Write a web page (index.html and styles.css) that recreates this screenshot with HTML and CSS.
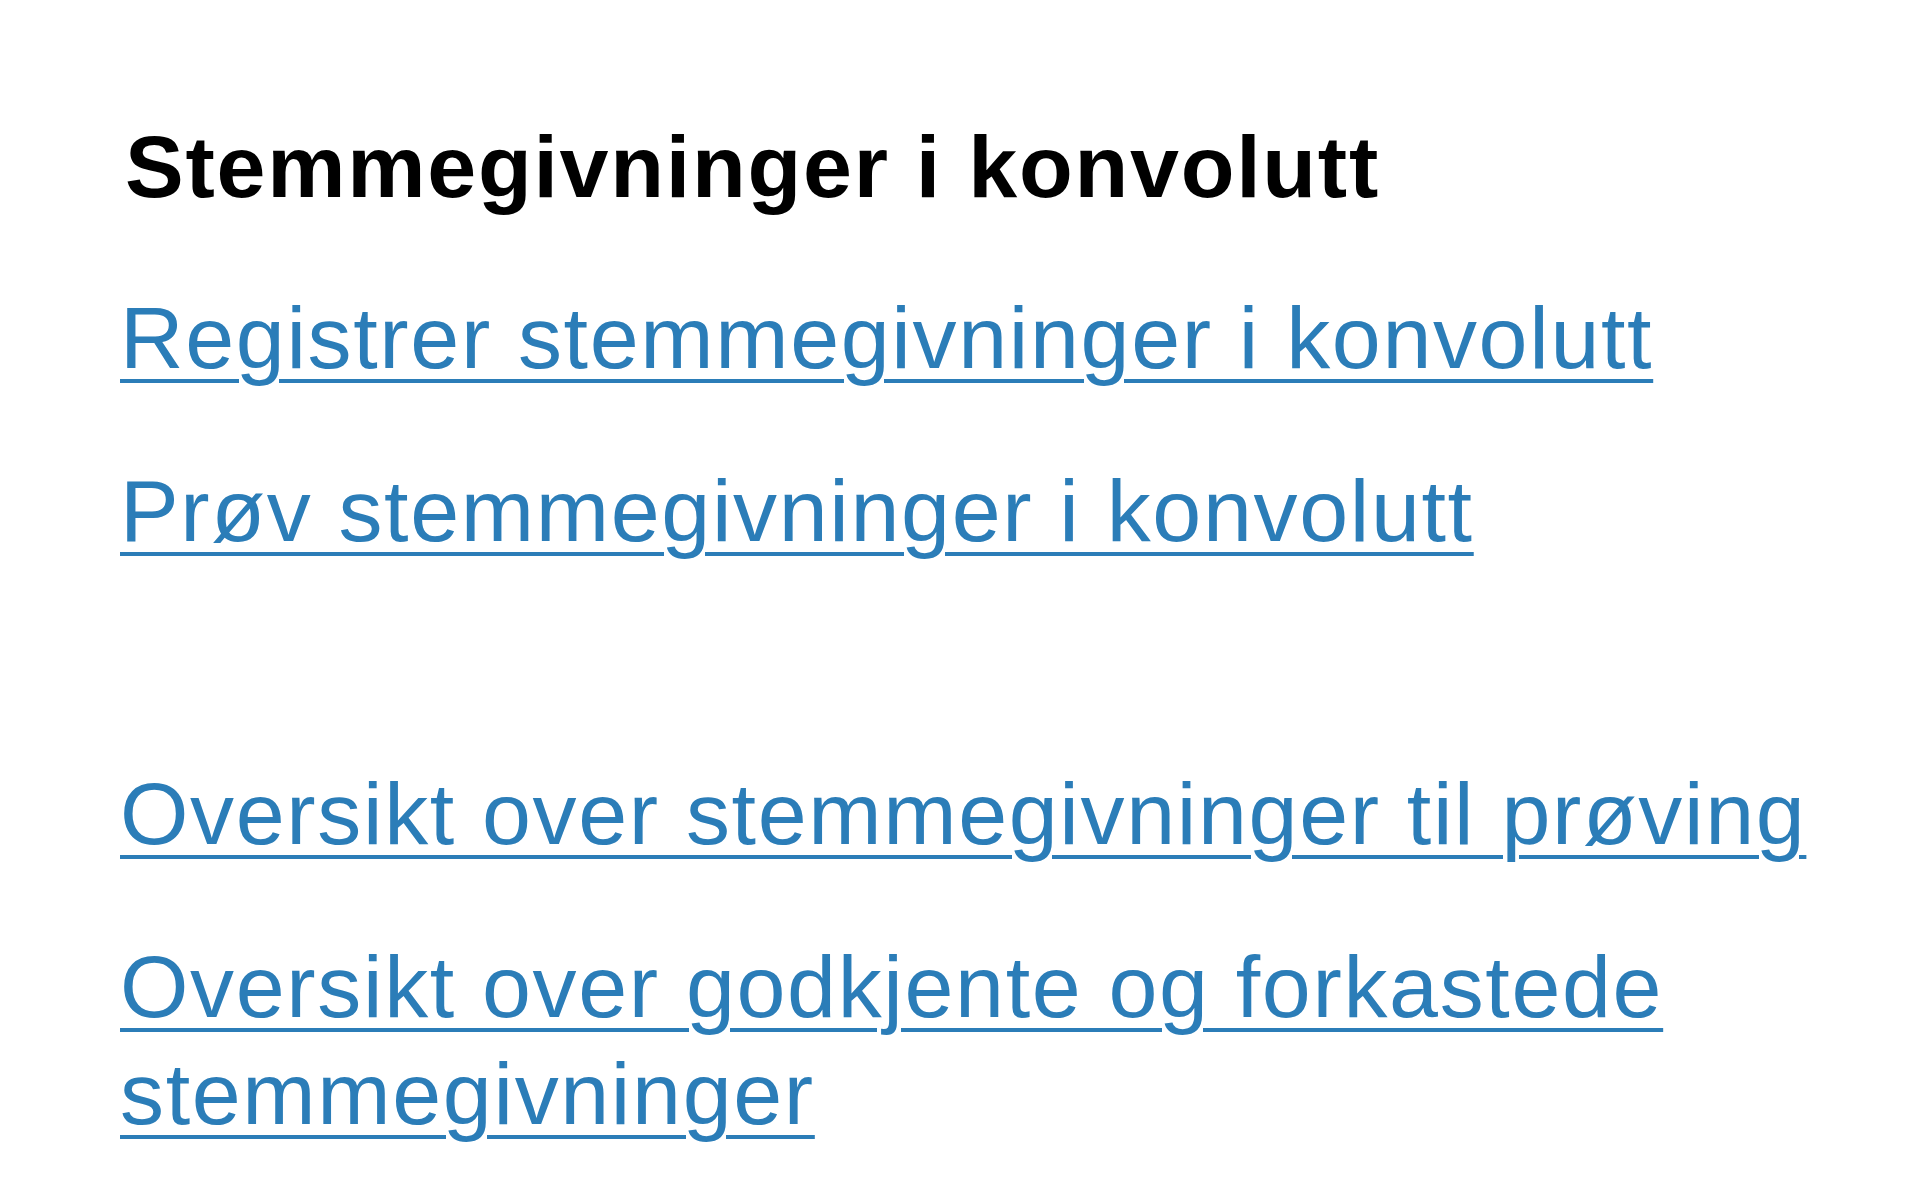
FILE: index.html
```html
<!DOCTYPE html>
<html lang="no">
<head>
<meta charset="utf-8">
<title>Stemmegivninger i konvolutt</title>
<link rel="stylesheet" href="styles.css">
</head>
<body>
<main class="page">
  <section class="group">
    <h2 class="title">Stemmegivninger i konvolutt</h2>
    <a class="link" href="#">Registrer stemmegivninger i konvolutt</a>
    <a class="link" href="#">Prøv stemmegivninger i konvolutt</a>
  </section>
  <section class="group">
    <a class="link" href="#">Oversikt over stemmegivninger til prøving</a>
    <a class="link" href="#">Oversikt over godkjente og forkastede stemmegivninger</a>
  </section>
</main>
</body>
</html>
```
FILE: styles.css
```css
html, body {
  margin: 0;
  padding: 0;
  background: #ffffff;
}
body {
  font-family: "Liberation Sans", Arial, sans-serif;
  font-size: 88px;
  line-height: 107px;
  letter-spacing: 1.65px;
}
.page {
  padding: 115px 40px 0 120px;
  display: flex;
  flex-direction: column;
  gap: 196px;
}
.group {
  display: flex;
  flex-direction: column;
  gap: 66px;
  align-items: flex-start;
}
.title {
  margin: 0;
  padding-left: 5px;
  font-size: 88px;
  line-height: 103px;
  font-weight: bold;
  letter-spacing: 1.75px;
  color: #000000;
}
.link {
  color: #2b7db8;
  text-decoration: underline;
  text-decoration-thickness: 4px;
  text-underline-offset: 11px;
}
```
